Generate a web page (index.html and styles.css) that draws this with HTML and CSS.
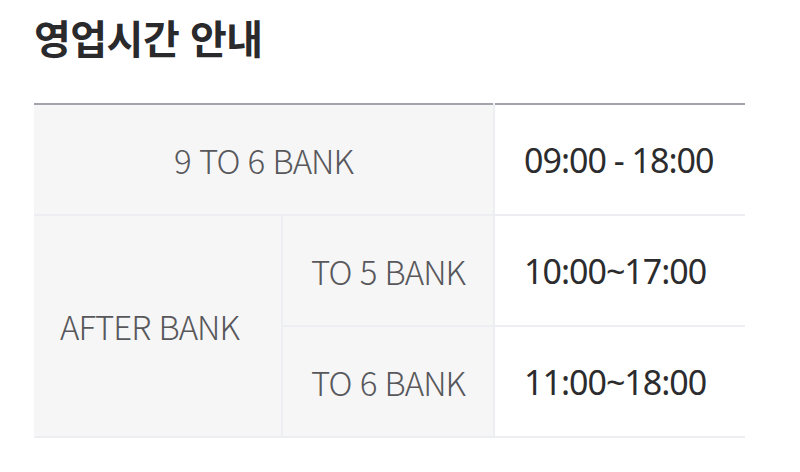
FILE: index.html
```html
<!DOCTYPE html>
<html lang="ko">
<head>
<meta charset="utf-8">
<link rel="stylesheet" href="styles.css">
</head>
<body>
<div class="page">
  <h1 class="title">영업시간 안내</h1>
  <table class="hours">
    <colgroup>
      <col class="c1"><col class="c2"><col class="c3">
    </colgroup>
    <tr>
      <th colspan="2" class="head">9 TO 6 BANK</th>
      <td class="time">09:00 - 18:00</td>
    </tr>
    <tr>
      <th rowspan="2" class="head group">AFTER BANK</th>
      <th class="head">TO 5 BANK</th>
      <td class="time">10:00~17:00</td>
    </tr>
    <tr>
      <th class="head">TO 6 BANK</th>
      <td class="time">11:00~18:00</td>
    </tr>
  </table>
</div>
</body>
</html>
```

FILE: styles.css
```css
html, body {
  margin: 0;
  padding: 0;
  background: #ffffff;
}
.page {
  padding: 13px 55px 0 34px;
  font-family: "Noto Sans CJK KR", "Noto Sans", sans-serif;
}
.title {
  margin: 0;
  font-size: 40px;
  line-height: 48px;
  font-weight: 700;
  color: #2a2a2c;
  letter-spacing: -0.5px;
}
.hours {
  margin-top: 42px;
  width: 711px;
  border-collapse: collapse;
  border-top: 2px solid #a3a3ab;
  border-bottom: 2px solid #eceef1;
}
.c1 { width: 248px; }
.c2 { width: 212px; }
.c3 { width: 251px; }
.hours th, .hours td {
  height: 109px;
  padding: 0;
  border: 2px solid #eceef1;
  border-top-width: 0;
}
.hours tr + tr th, .hours tr + tr td {
  border-top: 2px solid #eceef1;
}
.hours th:first-child { border-left: 0; }
.hours td { border-right: 0; }
.head {
  background: #f6f6f6;
  font-family: "Noto Sans CJK KR", sans-serif;
  font-weight: 300;
  font-size: 33px;
  color: #58585c;
  letter-spacing: -1px;
  text-align: center;
}
.hours th.group {
  padding-right: 16px;
}
.time {
  font-family: "Noto Sans", "Noto Sans CJK KR", sans-serif;
  font-weight: 400;
  font-size: 34px;
  color: #2c2c2e;
  letter-spacing: -1px;
  text-align: left;
}
.hours td.time {
  padding-left: 29px;
}
```
